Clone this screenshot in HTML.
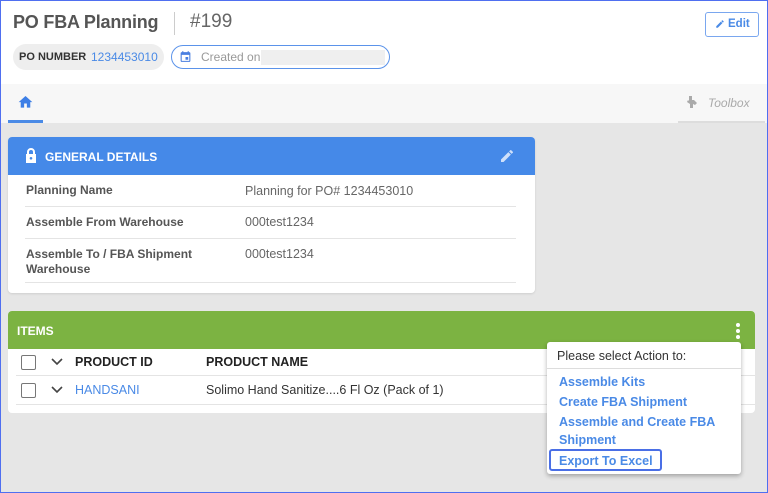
<!DOCTYPE html><html><head><style>
*{margin:0;padding:0;box-sizing:border-box}
body{width:768px;height:493px;overflow:hidden;font-family:"Liberation Sans",sans-serif;background:#fff;position:relative}
.a{position:absolute}
.frame{left:0;top:0;width:768px;height:493px;border:1.5px solid #4f6ff0;z-index:50;pointer-events:none}
.lbl{font-weight:bold;font-size:12px;color:#555}
.val{font-size:12.5px;color:#666}
.ln{height:1px;background:#e4e4e4}
.cb{width:15px;height:15px;border:1.5px solid #777;border-radius:2px;background:#fff}
.dd a{position:absolute;left:12px;color:#4a8ae6;font-weight:bold;font-size:12.5px;text-decoration:none}
</style></head><body>
<div class="a frame"></div>
<div class="a" style="left:13px;top:12px;font-size:18px;font-weight:bold;color:#555;letter-spacing:-0.2px">PO FBA Planning</div>
<div class="a" style="left:174px;top:12px;width:1px;height:23px;background:#ccc"></div>
<div class="a" style="left:190px;top:11px;font-size:19px;color:#666">#199</div>
<div class="a" style="left:13px;top:44px;width:151px;height:26px;background:#eee;border-radius:13px"></div>
<div class="a" style="left:19px;top:51px;font-size:11px;font-weight:bold;color:#333">PO NUMBER</div>
<div class="a" style="left:91px;top:50px;font-size:12px;color:#4a8ae6">1234453010</div>
<div class="a" style="left:171px;top:45px;width:219px;height:24px;border:1.5px solid #5b93ea;border-radius:12px"></div>
<svg class="a" style="left:179px;top:50px" width="13" height="13" viewBox="0 0 24 24"><path fill="#4a7fe0" d="M19 4h-1V2h-2v2H8V2H6v2H5c-1.1 0-2 .9-2 2v14c0 1.1.9 2 2 2h14c1.1 0 2-.9 2-2V6c0-1.1-.9-2-2-2zm0 16H5V9h14v11zM12 13h5v5h-5z"/></svg>
<div class="a" style="left:201px;top:50px;font-size:12px;color:#999">Created on</div>
<div class="a" style="left:261px;top:50px;width:124px;height:15px;background:#efefef"></div>
<div class="a" style="left:705px;top:12px;width:54px;height:25px;border:1.5px solid #7aa7ef;border-radius:3px"></div>
<svg class="a" style="left:715px;top:19px" width="10" height="10" viewBox="0 0 24 24"><path fill="#4a8ae6" d="M3 17.25V21h3.75L17.8 9.94l-3.75-3.75zM20.7 7.04a1 1 0 000-1.41l-2.34-2.34a1 1 0 00-1.41 0l-1.83 1.83 3.75 3.75z"/></svg>
<div class="a" style="left:728px;top:18px;font-size:11.5px;font-weight:bold;color:#4a8ae6">Edit</div>
<div class="a" style="left:0;top:84px;width:768px;height:39px;background:#f7f7f7"></div>
<svg class="a" style="left:17px;top:94px" width="17" height="15" viewBox="0 0 24 22"><path fill="#3d7fe6" d="M10 20v-6h4v6h5v-8h3L12 3 2 12h3v8z"/></svg>
<div class="a" style="left:8px;top:120px;width:35px;height:3px;background:#4a8ae6"></div>
<svg class="a" style="left:685px;top:95px" width="14" height="14" viewBox="0 0 14 14"><path fill="#aaa" d="M4 1h3v4h2l3 3-2 2-2-1v4H5V9L2 7l1-2 1 1z"/></svg>
<div class="a" style="left:708px;top:96px;font-size:12px;font-style:italic;color:#aaa">Toolbox</div>
<div class="a" style="left:678px;top:121px;width:87px;height:2px;background:#ddd"></div>
<div class="a" style="left:0;top:123px;width:768px;height:370px;background:#e6e6e6"></div>
<div class="a" style="left:8px;top:137px;width:527px;height:156px;background:#fff;border-radius:4px;overflow:hidden;box-shadow:0 1px 2px rgba(0,0,0,.1)">
<div class="a" style="left:0;top:0;width:527px;height:38px;background:#4589e8"></div>
<svg class="a" style="left:17px;top:11px" width="12" height="15" viewBox="0 0 12 15"><path fill="#fff" d="M2 6V4a4 4 0 018 0v2h1v9H1V6zm2 0h4V4a2 2 0 00-4 0zm2 3a1.3 1.3 0 100 2.6A1.3 1.3 0 006 9z"/></svg>
<div class="a" style="left:37px;top:13px;font-size:12px;font-weight:bold;color:#fff">GENERAL DETAILS</div>
<svg class="a" style="left:491px;top:11px" width="16" height="16" viewBox="0 0 24 24"><path fill="#cfe0fa" d="M3 17.25V21h3.75L17.8 9.94l-3.75-3.75zM20.7 7.04a1 1 0 000-1.41l-2.34-2.34a1 1 0 00-1.41 0l-1.83 1.83 3.75 3.75z"/></svg>
<div class="a lbl" style="left:18px;top:46px">Planning Name</div>
<div class="a val" style="left:237px;top:47px">Planning for PO# 1234453010</div>
<div class="a ln" style="left:17px;top:69px;width:491px"></div>
<div class="a lbl" style="left:18px;top:78px">Assemble From Warehouse</div>
<div class="a val" style="left:237px;top:78px">000test1234</div>
<div class="a ln" style="left:17px;top:101px;width:491px"></div>
<div class="a lbl" style="left:18px;top:110px;line-height:14.5px">Assemble To / FBA Shipment<br>Warehouse</div>
<div class="a val" style="left:237px;top:110px">000test1234</div>
<div class="a ln" style="left:17px;top:145px;width:491px"></div>
</div>
<div class="a" style="left:8px;top:311px;width:747px;height:102px;background:#fff;border-radius:4px;overflow:hidden">
<div class="a" style="left:0;top:0;width:747px;height:38px;background:#7cb342"></div>
<div class="a" style="left:9px;top:13px;font-size:12px;font-weight:bold;color:#fff">ITEMS</div>
<div class="a" style="left:728px;top:12px;width:4px;height:4px;border-radius:2px;background:#fff;box-shadow:0 6px 0 #fff,0 12px 0 #fff"></div>
<div class="a cb" style="left:13px;top:44px"></div>
<svg class="a" style="left:43px;top:47px" width="12" height="8" viewBox="0 0 12 8"><path d="M1 1l5 5 5-5" fill="none" stroke="#444" stroke-width="1.6"/></svg>
<div class="a" style="left:67px;top:44px;font-size:12.5px;font-weight:bold;color:#222">PRODUCT ID</div>
<div class="a" style="left:198px;top:44px;font-size:12.5px;font-weight:bold;color:#222">PRODUCT NAME</div>
<div class="a ln" style="left:8px;top:64px;width:739px"></div>
<div class="a cb" style="left:13px;top:72px"></div>
<svg class="a" style="left:43px;top:75px" width="12" height="8" viewBox="0 0 12 8"><path d="M1 1l5 5 5-5" fill="none" stroke="#444" stroke-width="1.6"/></svg>
<div class="a" style="left:67px;top:72px;font-size:12.5px;color:#4a8ae6">HANDSANI</div>
<div class="a" style="left:198px;top:72px;font-size:12.5px;color:#333">Solimo Hand Sanitize....6 Fl Oz (Pack of 1)</div>
<div class="a ln" style="left:8px;top:93px;width:739px"></div>
</div>
<div class="a dd" style="left:547px;top:342px;width:194px;height:132px;background:#fff;border-radius:3px;box-shadow:0 2px 5px rgba(0,0,0,.3)">
<div class="a" style="left:10px;top:7px;font-size:12.5px;color:#333">Please select Action to:</div>
<div class="a" style="left:0;top:26px;width:194px;height:1px;background:#ddd"></div>
<a style="top:33px">Assemble Kits</a>
<a style="top:53px">Create FBA Shipment</a>
<a style="top:73px">Assemble and Create FBA</a>
<a style="top:91px">Shipment</a>
<a style="top:112px">Export To Excel</a>
<div class="a" style="left:2px;top:107px;width:113px;height:22px;border:2px solid #4a6fe6;border-radius:3px"></div>
</div>
</body></html>
